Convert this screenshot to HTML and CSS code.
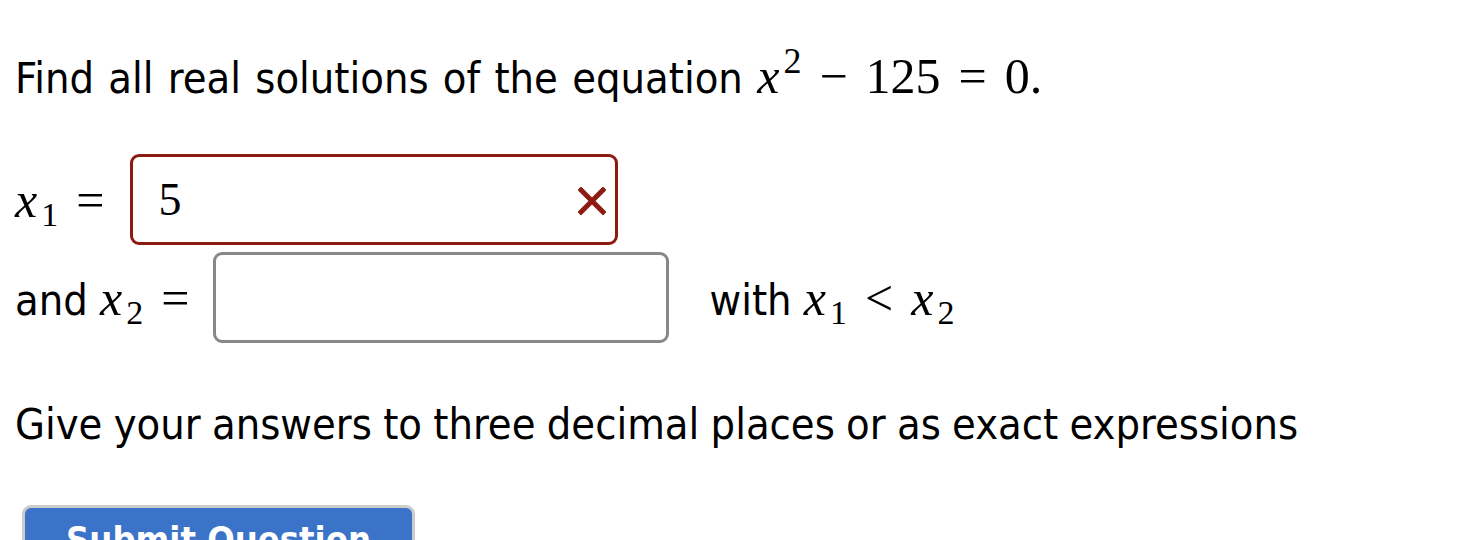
FILE: index.html
```html
<!DOCTYPE html>
<html>
<head>
  <link rel="stylesheet" href="styles.css">
</head>
<body>

<div class="question">
  <p class="prompt">
    Find all real solutions of the equation
    <span class="math"><i>x</i><sup>2</sup><span class="op">&minus;</span>125<span class="op">=</span>0.</span>
  </p>

  <div class="answer_row row_first">
    <span class="math"><i>x</i><sub>1</sub><span class="op">=</span></span>
    <div class="answer_box">
      <input type="text" class="answer answer_wrong" name="x1" value="5">
      <span class="mark_wrong">
        <svg width="28" height="28" viewBox="0 0 28 28">
          <path d="M3 3 L25 25 M25 3 L3 25" stroke="#8c1b12" stroke-width="5" stroke-linecap="square"/>
        </svg>
      </span>
    </div>
  </div>

  <div class="answer_row">
    <span class="label">and <span class="math"><i>x</i><sub>2</sub><span class="op">=</span></span></span>
    <div class="answer_box">
      <input type="text" class="answer answer_empty" name="x2" value="">
    </div>
    <span class="label with">with <span class="math"><i>x</i><sub>1</sub><span class="op">&lt;</span><i>x</i><sub>2</sub></span></span>
  </div>

  <p class="hint">Give your answers to three decimal places or as exact expressions</p>

  <button class="submit_button">Submit Question</button>
</div>

</body>
</html>
```

FILE: styles.css
```css
body {
  margin: 0;
  font-family: "DejaVu Sans Condensed", "DejaVu Sans", sans-serif;
  font-size: 43px;
  color: #000;
  background: #fff;
}

.question {
  padding-left: 15px;
}

.prompt {
  margin: 0;
  padding-top: 50px;
  line-height: 52px;
  word-spacing: 2px;
}

.math {
  font-family: "Liberation Serif", "DejaVu Serif", serif;
  font-size: 50px;
  white-space: nowrap;
  word-spacing: 0;
}

.math i {
  font-style: italic;
  padding-right: 4px;
}

.math sup {
  font-size: 36px;
  vertical-align: 20px;
  line-height: 0;
}

.math sub {
  font-size: 34px;
  vertical-align: -9px;
  line-height: 0;
}

.math .op {
  margin: 0 18px;
}

.answer_row {
  display: flex;
  align-items: center;
  margin-top: 7px;
}

.row_first {
  margin-top: 50px;
}

.answer_box {
  position: relative;
  margin-left: 6px;
}

.row_first .answer_box {
  margin-left: 8px;
}

.answer {
  box-sizing: border-box;
  height: 91px;
  padding: 0 0 0 25px;
  border-radius: 9px;
  font-family: "Liberation Serif", "DejaVu Serif", serif;
  font-size: 46px;
  color: #000;
  background: #fff;
  outline: none;
}

.answer_wrong {
  width: 488px;
  border: 3px solid #8c1b12;
}

.answer_empty {
  width: 456px;
  border: 3px solid #888;
}

.mark_wrong {
  position: absolute;
  right: 12px;
  top: 33px;
  line-height: 0;
}

.with {
  margin-left: 40px;
}

.hint {
  margin: 0;
  padding-top: 57px;
  line-height: 48px;
  word-spacing: -1px;
}

.submit_button {
  display: block;
  margin-top: 57px;
  margin-left: 7px;
  width: 393px;
  padding: 12px 0 20px 0;
  border: 3px solid #ccc;
  border-radius: 9px;
  background: #3b73c8;
  color: #fff;
  font-family: "DejaVu Sans Condensed", "DejaVu Sans", sans-serif;
  font-weight: bold;
  font-size: 36px;
  line-height: 40px;
  text-align: center;
}
```
